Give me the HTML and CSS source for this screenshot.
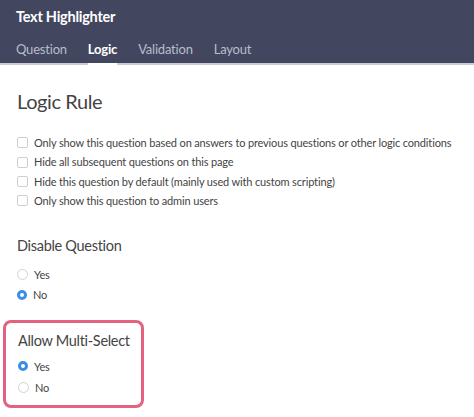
FILE: index.html
```html
<!doctype html>
<html lang="en">
  <head>
    <meta charset="utf-8">
    <title>Text Highlighter</title>
    <link rel="stylesheet" href="styles.css">
  </head>

  <body>
    <header class="topbar">
      <h1>Text Highlighter</h1>
      <nav class="tabs">
        <a href="#">Question</a>
        <a href="#" class="active">Logic</a>
        <a href="#">Validation</a>
        <a href="#">Layout</a>
      </nav>
    </header>

    <main>
      <h2>Logic Rule</h2>

      <ul class="checks">
        <li><span class="box"></span>Only show this question based on answers to previous questions or other logic conditions</li>
        <li><span class="box"></span>Hide all subsequent questions on this page</li>
        <li><span class="box"></span>Hide this question by default (mainly used with custom scripting)</li>
        <li><span class="box"></span>Only show this question to admin users</li>
      </ul>

      <section class="group">
        <h3>Disable Question</h3>
        <ul class="radios">
          <li><span class="dot"></span>Yes</li>
          <li><span class="dot on"></span>No</li>
        </ul>
      </section>

      <section class="group highlight">
        <h3>Allow Multi-Select</h3>
        <ul class="radios">
          <li><span class="dot on"></span>Yes</li>
          <li><span class="dot"></span>No</li>
        </ul>
      </section>
    </main>
  </body>
</html>
```

FILE: styles.css
```css
body {
  margin: 0;
  font-family: "Lato", "Open Sans", sans-serif;
  color: #444;
  background: #fff;
  -webkit-font-smoothing: antialiased;
}

.topbar {
  background: #42475f;
  height: 65px;
  padding-left: 16px;
  border-bottom: 2px solid #c9ccd6;
  box-sizing: border-box;
}

.topbar h1 {
  margin: 0;
  padding-top: 7px;
  font-size: 14.5px;
  letter-spacing: -0.25px;
  line-height: 20px;
  font-weight: 700;
  color: #fff;
}

.tabs {
  display: flex;
  gap: 21px;
  margin-top: 12px;
}

.tabs a {
  color: #b9bdcc;
  font-size: 13px;
  letter-spacing: -0.2px;
  line-height: 20px;
  text-decoration: none;
  padding-bottom: 4px;
  border-bottom: 2px solid transparent;
}

.tabs a.active {
  color: #fff;
  font-weight: 700;
  border-bottom-color: #fff;
}

main {
  padding: 0 0 0 17px;
}

h2 {
  margin: 0;
  padding-top: 23px;
  font-size: 20px;
  letter-spacing: -0.4px;
  line-height: 26px;
  font-weight: 400;
  color: #444;
}

ul {
  list-style: none;
  margin: 0;
  padding: 0;
}

.checks {
  margin-top: 19px;
}

.checks li,
.radios li {
  display: flex;
  align-items: center;
  white-space: nowrap;
  font-size: 11px;
  letter-spacing: -0.15px;
  line-height: 19.4px;
  color: #444;
}

.box {
  width: 9px;
  height: 9px;
  border: 1px solid #cfcfcf;
  border-radius: 2px;
  margin-right: 6px;
  flex: none;
}

.group {
  margin-top: 25px;
}

.group h3 {
  margin: 0 0 9px;
  font-size: 14.5px;
  letter-spacing: -0.3px;
  line-height: 20px;
  font-weight: 400;
  color: #444;
}

.radios li {
  font-size: 11px;
  letter-spacing: -0.2px;
  line-height: 20px;
}

.dot {
  width: 9px;
  height: 9px;
  border: 1px solid #d2d2d2;
  border-radius: 50%;
  margin-right: 6px;
  flex: none;
}

.dot.on {
  width: 4px;
  height: 4px;
  border: 3.5px solid #3b8de6;
  background: #fff;
}

.highlight {
  margin: 15px 0 0 -14px;
  width: 141px;
  box-sizing: border-box;
  border: 3px solid #e2627f;
  border-radius: 8px;
  padding: 8px 0 7px 12px;
}

.highlight h3 {
  margin-bottom: 5px;
}

.highlight .radios li {
  line-height: 21px;
}
```
